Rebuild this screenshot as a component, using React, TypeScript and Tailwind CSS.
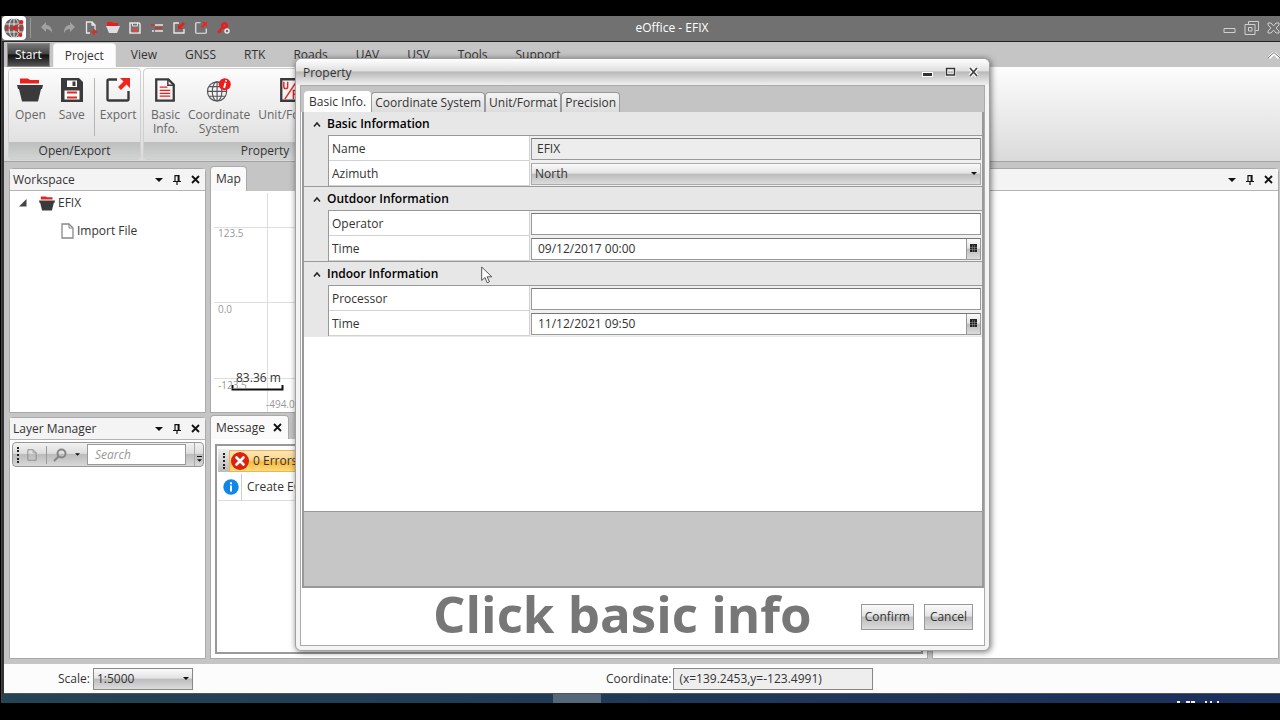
import { useState } from "react";
import type { ReactNode } from "react";

const GLOSS = "bg-[linear-gradient(#fafafa_0%,#e4e4e4_45%,#bdbdbd_52%,#dcdcdc_100%)]";

function FolderIcon({ className }: { className: string }) {
  return (
    <svg viewBox="0 0 26 24" className={className} aria-hidden="true">
      <path d="M3 5.500V.5h8l2 1.500h9v3.500z" fill="#e8231d" />
      <path d="M0 7h26l-1 4h-1l-3 12.500H5L2 11H1z" fill="#3a3a3c" />
    </svg>
  );
}

function SaveIcon({ className }: { className: string }) {
  return (
    <svg viewBox="0 0 24 24" className={className} aria-hidden="true">
      <path d="M1 0h18l4 4v20H1z" fill="#3a3a3c" />
      <path d="M7 2.500h10V9H7zM4.500 12.500h15v9h-15z" fill="#fff" />
      <path d="M12.500 3.500h3v4.500h-3z" fill="#3a3a3c" />
      <path d="M7 14.500h10M7 19.500h10" stroke="#e8231d" strokeWidth="2.200" />
    </svg>
  );
}

function ExportIcon({ className, color = "#3a3a3c" }: { className: string; color?: string }) {
  return (
    <svg viewBox="0 0 24 24" className={className} fill="none" aria-hidden="true">
      <path d="M11 1.500H3Q1.500 1.500 1.500 3v18q0 1.500 1.500 1.500h18q1.500 0 1.500-1.500V13" stroke={color} strokeWidth="2.400" />
      <path d="M14 0h10v10l-3.500-3.500-5.500 5.500-3-3L17.500 3.500z" fill="#f0231d" />
    </svg>
  );
}

function InfoSheetIcon({ className }: { className: string }) {
  return (
    <svg viewBox="0 0 21 25" className={className} fill="none" aria-hidden="true">
      <path d="M1.300 1.300H14l5.700 5.700v16.700H1.300z" stroke="#3a3a3c" strokeWidth="2.400" />
      <path d="M13.500 1v6.500H20" stroke="#3a3a3c" strokeWidth="1.500" />
      <path d="M5 9.500h8M5 13h11M5 16h11M5 19h11" stroke="#e8231d" strokeWidth="1.300" />
    </svg>
  );
}

function GlobeIcon({ className }: { className: string }) {
  return (
    <svg viewBox="0 0 26 25" className={className} fill="none" aria-hidden="true">
      <g stroke="#55565a" strokeWidth="1.200">
        <circle cx="11" cy="14" r="10" />
        <ellipse cx="11" cy="14" rx="5" ry="10" />
        <path d="M11 4v20M1 14h20M2.500 9h17M2.500 19h17" />
      </g>
      <circle cx="19" cy="6.500" r="6.300" fill="#ee1c1c" />
      <path d="M19.800 5l-1.500 5.500M20.500 2.300l-.3 1.400" stroke="#fff" strokeWidth="2" />
    </svg>
  );
}

function UnitIcon({ className }: { className: string }) {
  return (
    <svg viewBox="0 0 25 25" className={className} fill="none" aria-hidden="true">
      <path d="M1.300 1.300h22.400v22.400H1.300z" stroke="#3a3a3c" strokeWidth="2.400" />
      <path d="M4 4v5q0 2 2 2t2-2V4M17 4L5 22M14 22V13h5M14 17h4" stroke="#e8231d" strokeWidth="1.500" />
    </svg>
  );
}

function AppLogo() {
  return (
    <svg viewBox="0 0 24 24" className="h-6 w-6 rounded-sm bg-white" fill="none" aria-hidden="true">
      <circle cx="12" cy="12" r="9.800" fill="#636363" />
      <g stroke="#fff" strokeWidth=".8">
        <ellipse cx="12" cy="12" rx="5" ry="9.800" />
        <path d="M12 2v20M2 8h20M2 16h20" />
      </g>
      <path d="M5 12h14M12 12l7 7M12 12l7-6" stroke="#e2211c" strokeWidth="1" />
      <g fill="#e2211c">
        <circle cx="5" cy="11.500" r="1.600" />
        <circle cx="12.500" cy="12" r="2.200" />
        <circle cx="19.500" cy="6" r="1.900" />
        <circle cx="18.500" cy="12" r="1.700" />
        <circle cx="18.500" cy="19" r="1.900" />
      </g>
    </svg>
  );
}

function PageIcon({ className }: { className: string }) {
  return (
    <svg viewBox="0 0 13 16" className={className} fill="none" aria-hidden="true">
      <path d="M1 1h7l4 4v10H1z" stroke="currentColor" strokeWidth="1.300" />
      <path d="M8 1v4h4" stroke="currentColor" />
    </svg>
  );
}

function Caret({ className = "h-1 w-2" }: { className?: string }) {
  return (
    <svg viewBox="0 0 8 4" className={className} aria-hidden="true">
      <path d="M0 0h8L4 4z" fill="#111" />
    </svg>
  );
}

function CloseIcon() {
  return (
    <svg viewBox="0 0 9 9" className="h-[9px] w-[9px]" aria-hidden="true">
      <path d="M1 1l7 7M8 1L1 8" stroke="#111" strokeWidth="1.800" />
    </svg>
  );
}

function PinIcon() {
  return (
    <svg viewBox="0 0 8 10" className="h-[10px] w-2" fill="none" aria-hidden="true">
      <path d="M2 6V.7h4V6M0 6.500h8M4 7v3" stroke="#111" strokeWidth="1.200" />
      <path d="M5.300 1v5" stroke="#111" strokeWidth="1.400" />
    </svg>
  );
}

function PanelHeader({ title }: { title: string }) {
  return (
    <div className="flex h-[22px] shrink-0 items-center justify-between border-b border-[#b4b4b4] bg-[#f4f4f4] pr-[5px] pl-[3px]">
      <h2>{title}</h2>
      <div className="flex items-center gap-[10px]">
        <button aria-label="Window options"><Caret /></button>
        <button aria-label="Pin panel"><PinIcon /></button>
        <button aria-label="Close panel"><CloseIcon /></button>
      </div>
    </div>
  );
}

function QuickAccess() {
  const soft = "#e6e6e6";
  return (
    <div className="flex items-center gap-[6px]">
      <button aria-label="Undo" className="grid h-4 w-4 place-items-center">
        <svg viewBox="0 0 12 11" className="h-[11px] w-3" aria-hidden="true">
          <path d="M5 0v3q6 0 6 8-2-4-6-4v3L0 5z" fill="#a2a2a2" />
        </svg>
      </button>
      <button aria-label="Redo" className="grid h-4 w-4 place-items-center">
        <svg viewBox="0 0 12 11" className="h-[11px] w-3" aria-hidden="true">
          <path d="M7 0v3Q1 3 1 11q2-4 6-4v3l5-5z" fill="#a2a2a2" />
        </svg>
      </button>
      <button aria-label="New" className="grid h-4 w-4 place-items-center">
        <svg viewBox="0 0 12 14" className="h-[14px] w-3" fill="none" aria-hidden="true">
          <path d="M5 12H1.500V1H7l3 3v5M7 1v3h3" stroke={soft} strokeWidth="1.300" />
          <path d="M9 8v6M6 11h6" stroke="#e8231d" strokeWidth="1.500" />
        </svg>
      </button>
      <button aria-label="Open project" className="grid h-4 w-4 place-items-center">
        <svg viewBox="0 0 14 11" className="h-[11px] w-[14px]" aria-hidden="true">
          <path d="M1 4V0h5l1 1h5v3z" fill="#ea1c1c" />
          <path d="M0 4h14l-3 7H3z" fill="#dedede" />
        </svg>
      </button>
      <button aria-label="Save project" className="grid h-4 w-4 place-items-center">
        <svg viewBox="0 0 12 12" className="h-3 w-3" fill="none" aria-hidden="true">
          <path d="M1 1h9l1 1v9H1z" stroke={soft} strokeWidth="1.500" />
          <path d="M3.500 1v3h5V1" stroke={soft} />
          <path d="M3 7h6M3 9.500h6" stroke="#e8453f" strokeWidth="1.300" />
        </svg>
      </button>
      <button aria-label="List" className="grid h-4 w-4 place-items-center">
        <svg viewBox="0 0 12 10" className="h-[10px] w-3" aria-hidden="true">
          <path d="M4 2h8M4 8h8M1 8h2" stroke={soft} strokeWidth="1.600" />
          <path d="M0 2h3M4 5h7" stroke="#e8231d" strokeWidth="1.400" />
        </svg>
      </button>
      <button aria-label="Import" className="grid h-4 w-4 place-items-center">
        <svg viewBox="0 0 12 12" className="h-3 w-3" fill="none" aria-hidden="true">
          <path d="M6 1H1v10h10V7" stroke={soft} strokeWidth="1.400" />
          <path d="M5 7V2l1.500 1.500L10 0l2 2-3.500 3.500L10 7z" fill="#ea1c1c" />
        </svg>
      </button>
      <button aria-label="Export data" className="grid h-4 w-4 place-items-center">
        <ExportIcon className="h-3 w-3" color={soft} />
      </button>
      <button aria-label="License" className="grid h-4 w-4 place-items-center">
        <svg viewBox="0 0 13 12" className="h-3 w-[13px]" fill="none" aria-hidden="true">
          <circle cx="7.500" cy="3.500" r="2.300" stroke="#ea1c1c" strokeWidth="2.400" />
          <path d="M5.500 5.500L1 10.500M2 8.500l2 2" stroke="#ea1c1c" strokeWidth="2" />
          <circle cx="10" cy="9" r="2" stroke={soft} strokeWidth="1.500" />
        </svg>
      </button>
    </div>
  );
}

function TitleBar() {
  return (
    <header className="flex h-[26px] shrink-0 items-center border-b border-[#222] bg-[#717171] pb-[2px]">
      <div className="flex flex-1 items-center">
        <AppLogo />
        <div className="mr-2 ml-1 h-5 border-l border-[#999]" />
        <QuickAccess />
      </div>
      <h1 className="pl-[62px] text-white">eOffice - EFIX</h1>
      <div className="flex flex-1 items-center justify-end gap-2">
        <button aria-label="Minimize">
          <svg viewBox="0 0 13 14" className="h-[14px] w-[13px]" fill="none" aria-hidden="true">
            <path d="M1 7.500h11v4H1z" stroke="#d0d0d0" />
          </svg>
        </button>
        <button aria-label="Restore">
          <svg viewBox="0 0 15 14" className="h-[14px] w-[15px]" fill="none" stroke="#d0d0d0" aria-hidden="true">
            <path d="M4.500 3V.5h10v9h-3M1 3.500h10v10H1z" />
            <path d="M4.500 6.500h3.500v3.500H4.500z" />
          </svg>
        </button>
        <button aria-label="Close">
          <svg viewBox="0 0 13 12" className="h-3 w-[13px]" fill="none" stroke="#d0d0d0" aria-hidden="true">
            <path d="M1 1h3l2.500 3L9 1h3v2L9 6l3 3v2H9L6.500 8 4 11H1V9l3-3-3-3z" />
          </svg>
        </button>
      </div>
    </header>
  );
}

const RIBBON_TABS = ["View", "GNSS", "RTK", "Roads", "UAV", "USV", "Tools", "Support"];

function RibbonTool({ label, children }: { label: ReactNode; children: ReactNode }) {
  return (
    <button className="flex flex-col items-center gap-[6px] text-center leading-[14px] whitespace-nowrap text-[#666]">
      {children}
      <span>{label}</span>
    </button>
  );
}

function Ribbon() {
  return (
    <>
      <nav className="flex h-[25px] shrink-0 items-end pl-[3px]">
        <button className="h-6 border border-[#888] bg-[linear-gradient(#777_0%,#444_45%,#111_50%,#555_100%)] px-[7px] text-white">Start</button>
        <button className="ml-[3px] h-6 rounded-t border border-b-0 border-[#eee] bg-[#fcfcfc] px-[11px]">Project</button>
        <div className="ml-[3px] flex flex-1 gap-[4px]">
          {RIBBON_TABS.map((tab) => (
            <button key={tab} className="h-6 px-3">{tab}</button>
          ))}
        </div>
        <button aria-label="Collapse ribbon" className="mb-2">
          <svg viewBox="0 0 12 7" className="h-[7px] w-3" fill="none" aria-hidden="true">
            <path d="M1 6l5-5 5 5" stroke="#fff" strokeWidth="3" />
            <path d="M0 6l6-5.500L12 6" stroke="#777" />
          </svg>
        </button>
      </nav>
      <div className="flex h-[95px] shrink-0 gap-[2px] border-b border-[#a2a2a2] bg-[linear-gradient(#fdfdfd,#dadada)] p-px pl-1">
        <section className="flex w-[133px] flex-col rounded-sm border border-[#cfcfcf]">
          <div className="flex flex-1 items-start pt-[9px] pl-[6px]">
            <RibbonTool label="Open"><FolderIcon className="h-6 w-[26px]" /></RibbonTool>
            <div className="ml-[13px]"><RibbonTool label="Save"><SaveIcon className="h-6 w-6" /></RibbonTool></div>
            <div className="ml-[9px] h-[58px] border-l border-[#b5b5b5]" />
            <div className="ml-[5px]"><RibbonTool label="Export"><ExportIcon className="h-6 w-6" /></RibbonTool></div>
          </div>
          <h2 className="bg-[linear-gradient(#bdbfbf,#d2d4d4)] text-center leading-[17px]">Open/Export</h2>
        </section>
        <section className="flex w-[244px] flex-col rounded-sm border border-[#cfcfcf]">
          <div className="flex flex-1 items-start gap-2 pt-[9px] pl-[7px]">
            <RibbonTool label={<>Basic<br />Info.</>}><InfoSheetIcon className="h-6 w-5" /></RibbonTool>
            <RibbonTool label={<>Coordinate<br />System</>}><GlobeIcon className="h-6 w-[26px]" /></RibbonTool>
            <RibbonTool label="Unit/Format"><UnitIcon className="h-6 w-6" /></RibbonTool>
          </div>
          <h2 className="bg-[linear-gradient(#bdbfbf,#d2d4d4)] text-center leading-[17px]">Property</h2>
        </section>
      </div>
    </>
  );
}

function Workspace() {
  return (
    <section className="flex h-[245px] flex-col rounded-t-sm border border-[#a9a9a9] bg-white">
      <PanelHeader title="Workspace" />
      <ul className="pt-[2px]">
        <li>
          <div className="flex h-[20px] items-center pl-[9px]">
            <svg viewBox="0 0 8 8" className="h-2 w-2" aria-hidden="true">
              <path d="M7.500 0v7.500H0z" fill="#444" />
            </svg>
            <FolderIcon className="ml-3 h-[15px] w-4" />
            <span className="ml-[3px]">EFIX</span>
          </div>
          <ul>
            <li className="mt-2 flex h-5 items-center gap-[3px] pl-[51px]">
              <PageIcon className="h-4 w-[13px] text-[#888]" />
              <span>Import File</span>
            </li>
          </ul>
        </li>
      </ul>
    </section>
  );
}

function Grip() {
  return <span className="h-4 w-0 border-l-2 border-dotted border-[#222]" />;
}

function LayerManager() {
  return (
    <section className="flex min-h-0 flex-1 flex-col rounded-t-sm border border-[#a9a9a9] bg-white">
      <PanelHeader title="Layer Manager" />
      <div className="mt-[2px] mr-px ml-[2px] flex h-[25px] items-center rounded-sm border border-[#999] bg-[linear-gradient(#f2f2f2_0%,#dedede_45%,#bcbcbc_50%,#d8d8d8_100%)] pl-1">
        <Grip />
        <button aria-label="New layer" className="ml-2 text-[#8c8c8c]"><PageIcon className="h-3 w-[10px]" /></button>
        <div className="ml-[9px] h-[18px] border-l border-[#999]" />
        <button aria-label="Search options" className="ml-[6px] flex items-center gap-2">
          <svg viewBox="0 0 14 14" className="h-[14px] w-[14px]" fill="none" stroke="#858585" strokeWidth="2" aria-hidden="true">
            <circle cx="8.500" cy="5.500" r="4" />
            <path d="M5.500 8.500L1 13" />
          </svg>
          <Caret className="h-[3px] w-[5px]" />
        </button>
        <input aria-label="Search layers" placeholder="Search" className="ml-[7px] h-[21px] w-[99px] border border-[#999] bg-white px-[7px] italic placeholder:text-[#999]" />
        <button aria-label="More toolbar options" className="ml-auto flex h-full w-[9px] flex-col items-center justify-end gap-[2px] border-l border-[#aaa] pb-1">
          <span className="w-[5px] border-t border-[#111]" />
          <Caret className="h-[3px] w-[5px]" />
        </button>
      </div>
    </section>
  );
}

function MapView() {
  return (
    <section className="flex h-[247px] flex-col">
      <div className="flex shrink-0">
        <button className="h-[25px] rounded-t border border-b-0 border-[#aaa] bg-[#fafafa] px-[5px]">Map</button>
      </div>
      <div className="relative flex-1 overflow-hidden border border-t-0 border-[#a9a9a9] bg-white">
        <svg className="h-full w-full" aria-hidden="true">
          <path d="M3 36.500h716M3 111.500h716M3 187.500h716M56.500 2v220" stroke="#dedede" strokeWidth="1" fill="none" />
          <path d="M21.500 194v4.500h50V194" stroke="#111" strokeWidth="2" fill="none" />
        </svg>
        <span className="absolute top-[34px] left-[7px] text-[10px] text-[#999]">123.5</span>
        <span className="absolute top-[110px] left-[7px] text-[10px] text-[#999]">0.0</span>
        <span className="absolute top-[186px] left-[7px] text-[10px] text-[#999]">-123.5</span>
        <span className="absolute top-[205px] left-[55px] text-[10px] text-[#999]">-494.0</span>
        <span className="absolute top-[179px] left-[25px]">83.36 m</span>
      </div>
    </section>
  );
}

function Messages() {
  return (
    <section className="flex min-h-0 flex-1 flex-col">
      <div className="flex shrink-0">
        <div className="flex h-[24px] items-center gap-[8px] rounded-t border border-b-0 border-[#aaa] bg-[#fafafa] pr-[6px] pl-[5px]">
          <h2>Message</h2>
          <button aria-label="Close messages"><CloseIcon /></button>
        </div>
      </div>
      <div className="flex-1 border border-t-0 border-[#a9a9a9] bg-white p-1 pt-[5px]">
        <div className="h-full border-2 border-[#999] pt-[3px] pl-px">
          <div className="flex h-[23px] items-center">
            <div className="flex h-full w-[11px] items-center bg-[linear-gradient(#eee,#bbb)] pl-[5px]"><Grip /></div>
            <button className="flex h-[22px] w-[90px] items-center gap-1 border border-[#e7b560] bg-[linear-gradient(#fde6b4_0%,#fcd58c_45%,#f9b83c_55%,#fddc7c_100%)] pl-px">
              <svg viewBox="0 0 18 18" className="h-[18px] w-[18px]" aria-hidden="true">
                <circle cx="9" cy="9" r="9" fill="#d8230f" />
                <path d="M5.500 5.500l7 7M12.500 5.500l-7 7" stroke="#fff" strokeWidth="2.600" strokeLinecap="round" />
              </svg>
              <span>0 Errors</span>
            </button>
          </div>
          <div className="mt-[2px] flex h-[27px] items-center border-b border-[#ddd] pl-[5px]">
            <svg viewBox="0 0 16 16" className="h-4 w-4" aria-hidden="true">
              <circle cx="8" cy="8" r="7.700" fill="#1085ea" />
              <path d="M8 3.200v2M8 6.500v6" stroke="#fff" strokeWidth="2" />
            </svg>
            <div className="ml-[2px] flex h-full items-center border-l border-[#ccc] pl-[5px]">Create EOffice project</div>
          </div>
        </div>
      </div>
    </section>
  );
}

function StatusBar() {
  return (
    <footer className="flex h-[30px] shrink-0 items-center border-b border-[#555] bg-[#fcfcfc] pl-[54px]">
      <label htmlFor="scale">Scale:</label>
      <div className="relative ml-[3px]">
        <select id="scale" defaultValue="1:5000" className={`h-[22px] w-[100px] appearance-none border border-[#888] px-[3px] ${GLOSS}`}>
          <option>1:5000</option>
        </select>
        <Caret className="pointer-events-none absolute top-[9px] right-1 h-[3px] w-[6px]" />
      </div>
      <label htmlFor="coordinate" className="ml-[413px]">Coordinate:</label>
      <input id="coordinate" readOnly value="(x=139.2453,y=-123.4991)" className="ml-[2px] h-[22px] w-[200px] border border-[#888] bg-[#eee] px-[5px]" />
    </footer>
  );
}

const BOX = "h-[22px] border border-[#999] border-t-[#777]";

function TextField({ id, value, muted }: { id: string; value: string; muted?: boolean }) {
  const [text, setText] = useState(value);
  return (
    <input
      id={id}
      value={text}
      readOnly={muted}
      onChange={(e) => setText(e.target.value)}
      className={muted ? `${BOX} w-full bg-[#ededed] px-[5px]` : `${BOX} w-full bg-white px-[5px]`}
    />
  );
}

function DateField({ id, value }: { id: string; value: string }) {
  const [text, setText] = useState(value);
  return (
    <div className={`${BOX} flex w-full bg-white`}>
      <input id={id} value={text} onChange={(e) => setText(e.target.value)} className="min-w-0 flex-1 px-[6px]" />
      <button aria-label="Open calendar" className={`flex w-[14px] justify-center border-l border-[#999] pt-[5px] ${GLOSS}`}>
        <svg viewBox="0 0 7 8" className="h-2 w-[7px]" aria-hidden="true">
          <path d="M0 0h7v8H0z" fill="#222" />
          <path d="M2.500 1v7M4.500 1v7M0 3.500h7M0 5.500h7" stroke="#999" strokeWidth=".5" />
        </svg>
      </button>
    </div>
  );
}

function PropertyRow({ id, label, children }: { id: string; label: string; children: ReactNode }) {
  return (
    <div className="flex h-[25px]">
      <label htmlFor={id} className="w-[201px] shrink-0 border-r border-b border-[#d2d2d2] bg-white pl-[3px] leading-[26px]">{label}</label>
      <div className="flex flex-1 items-center bg-[#f0f0f0] px-px">{children}</div>
    </div>
  );
}

function PropertyGroup({ title, children }: { title: string; children: ReactNode }) {
  return (
    <section className="flex h-[75px] flex-col border-b border-[#999] bg-[#e7e7e7] last:border-transparent">
      <h3 className="flex h-[23px] shrink-0 items-center gap-[6px] pt-px pl-[9px] font-semibold text-black">
        <svg viewBox="0 0 8 6" className="h-[6px] w-2" fill="none" aria-hidden="true">
          <path d="M1 5.500L4 2l3 3.500" stroke="#222" strokeWidth="1.500" />
        </svg>
        {title}
      </h3>
      <div className="ml-6 border-t border-l border-[#999]">{children}</div>
    </section>
  );
}

const DIALOG_TABS = ["Coordinate System", "Unit/Format", "Precision"];

function PropertyDialog() {
  return (
    <div role="dialog" aria-labelledby="dialog-title" className="absolute top-[58px] left-[295px] flex h-[593px] w-[695px] flex-col rounded-md border border-[#a0a0a0] bg-[#f4f4f4] px-[4px] pb-[4px] shadow-[1px_1px_6px_rgba(0,0,0,0.55)]">
      <div className="-mx-[4px] flex h-[26px] shrink-0 items-center justify-between rounded-t-md bg-[linear-gradient(#fff_0%,#e0e0e0_45%,#b9b9b9_50%,#f0f0f0_100%)] pt-px pr-[10px] pl-[7px]">
        <h2 id="dialog-title">Property</h2>
        <div className="flex items-center gap-3">
          <button aria-label="Minimize dialog">
            <svg viewBox="0 0 11 11" className="h-[11px] w-[11px]" aria-hidden="true"><path d="M0 5h11v5H0z" fill="#fff" /><path d="M1 6h9v3H1z" fill="#333" /></svg>
          </button>
          <button aria-label="Maximize dialog">
            <svg viewBox="0 0 11 11" className="h-[11px] w-[11px]" fill="none" aria-hidden="true"><path d="M1.500 2h8v6h-8z" stroke="#fff" strokeWidth="3" /><path d="M1.500 1.500h8v6.500h-8z" stroke="#333" strokeWidth="1.500" /></svg>
          </button>
          <button aria-label="Close dialog">
            <svg viewBox="0 0 11 11" className="h-[11px] w-[11px]" aria-hidden="true"><path d="M2 1l7 8M9 1L2 9" stroke="#fff" strokeWidth="4" /><path d="M2 1l7 8M9 1L2 9" stroke="#444" strokeWidth="1.800" /></svg>
          </button>
        </div>
      </div>
      <div className="flex min-h-0 flex-1 flex-col border border-[#aaa] bg-white">
        <div role="tablist" className="flex h-[26px] shrink-0 items-end bg-[#c4c4c4] pl-[3px]">
          <button role="tab" aria-selected="true" className="h-[21px] rounded-t-sm bg-white px-[5px]">Basic Info.</button>
          {DIALOG_TABS.map((tab) => (
            <button key={tab} role="tab" aria-selected="false" className="h-[20px] rounded-t-sm border border-b-0 border-[#999] bg-[linear-gradient(#f5f5f5,#dcdcdc)] px-[3px]">{tab}</button>
          ))}
        </div>
        <div className="ml-px flex flex-1 flex-col border-r-2 border-b-2 border-l-2 border-[#999]">
          <div className="flex-1">
            <PropertyGroup title="Basic Information">
              <PropertyRow id="name" label="Name"><TextField id="name" value="EFIX" muted /></PropertyRow>
              <PropertyRow id="azimuth" label="Azimuth">
                <div className="relative w-full">
                  <select id="azimuth" defaultValue="North" className={`block h-[22px] w-full appearance-none border border-[#aaa] px-[3px] ${GLOSS}`}>
                    <option>North</option>
                    <option>South</option>
                  </select>
                  <Caret className="pointer-events-none absolute top-[9px] right-1 h-[3px] w-[6px]" />
                </div>
              </PropertyRow>
            </PropertyGroup>
            <PropertyGroup title="Outdoor Information">
              <PropertyRow id="operator" label="Operator"><TextField id="operator" value="" /></PropertyRow>
              <PropertyRow id="outdoor-time" label="Time"><DateField id="outdoor-time" value="09/12/2017 00:00" /></PropertyRow>
            </PropertyGroup>
            <PropertyGroup title="Indoor Information">
              <PropertyRow id="processor" label="Processor"><TextField id="processor" value="" /></PropertyRow>
              <PropertyRow id="indoor-time" label="Time"><DateField id="indoor-time" value="11/12/2021 09:50" /></PropertyRow>
            </PropertyGroup>
          </div>
          <div className="h-[75px] shrink-0 border-t border-[#999] bg-[#c6c6c6]" />
        </div>
        <div className="flex h-[57px] shrink-0 items-center justify-end gap-[10px] pr-[11px]">
          <button className={`h-[26px] border border-[#999] px-[3px] ${GLOSS}`}>Confirm</button>
          <button className={`h-[26px] border border-[#999] px-[5px] ${GLOSS}`}>Cancel</button>
        </div>
      </div>
    </div>
  );
}

export default function App() {
  return (
    <div className="relative flex h-screen flex-col overflow-hidden bg-black pt-4 pb-[17px] pl-px font-['Open_Sans','Noto_Sans',sans-serif] text-[12px] leading-4 text-[#333]">
      <div className="flex min-h-0 flex-1 flex-col border-l border-[#444] bg-[#c5c5c5]">
        <TitleBar />
        <div className="flex min-h-0 flex-1 flex-col border-l-2 border-[#333]">
          <Ribbon />
          <main className="flex min-h-0 flex-1 gap-1 pt-[4px] pb-[5px] pl-[5px]">
            <div className="flex w-[197px] shrink-0 flex-col gap-[4px] pt-[2px]">
              <Workspace />
              <LayerManager />
            </div>
            <div className="flex min-w-0 flex-1 flex-col gap-[2px]">
              <MapView />
              <Messages />
            </div>
            <section className="mt-[2px] mr-px flex w-[347px] shrink-0 flex-col rounded-t-sm border border-[#a9a9a9] bg-white">
              <PanelHeader title="" />
            </section>
          </main>
          <StatusBar />
        </div>
        <div className="flex h-[9px] shrink-0 overflow-hidden bg-[linear-gradient(90deg,#254453,#1c2f5c)]">
          <span className="ml-[551px] w-12 bg-[#54687a]" />
          <svg viewBox="0 0 44 9" className="mr-[60px] ml-auto h-[9px] w-11" aria-hidden="true">
            <path d="M1 8h3M10 8h4M15 8h4M29 8h2M34 8h2M41 8h2" stroke="#eee" strokeWidth="2" />
          </svg>
        </div>
      </div>

      <PropertyDialog />

      <svg viewBox="0 0 12 18" className="absolute top-[266px] left-[481px] h-[18px] w-3" aria-hidden="true">
        <path d="M.7 1v13.500l3.300-3 2.200 5.300 2.200-1L6.200 10.800h4.600z" fill="#fff" stroke="#555" strokeWidth="1" />
      </svg>
      <p className="absolute top-[583px] left-[433px] text-[51px] leading-[60px] font-bold text-[#777]">Click basic info</p>
    </div>
  );
}
